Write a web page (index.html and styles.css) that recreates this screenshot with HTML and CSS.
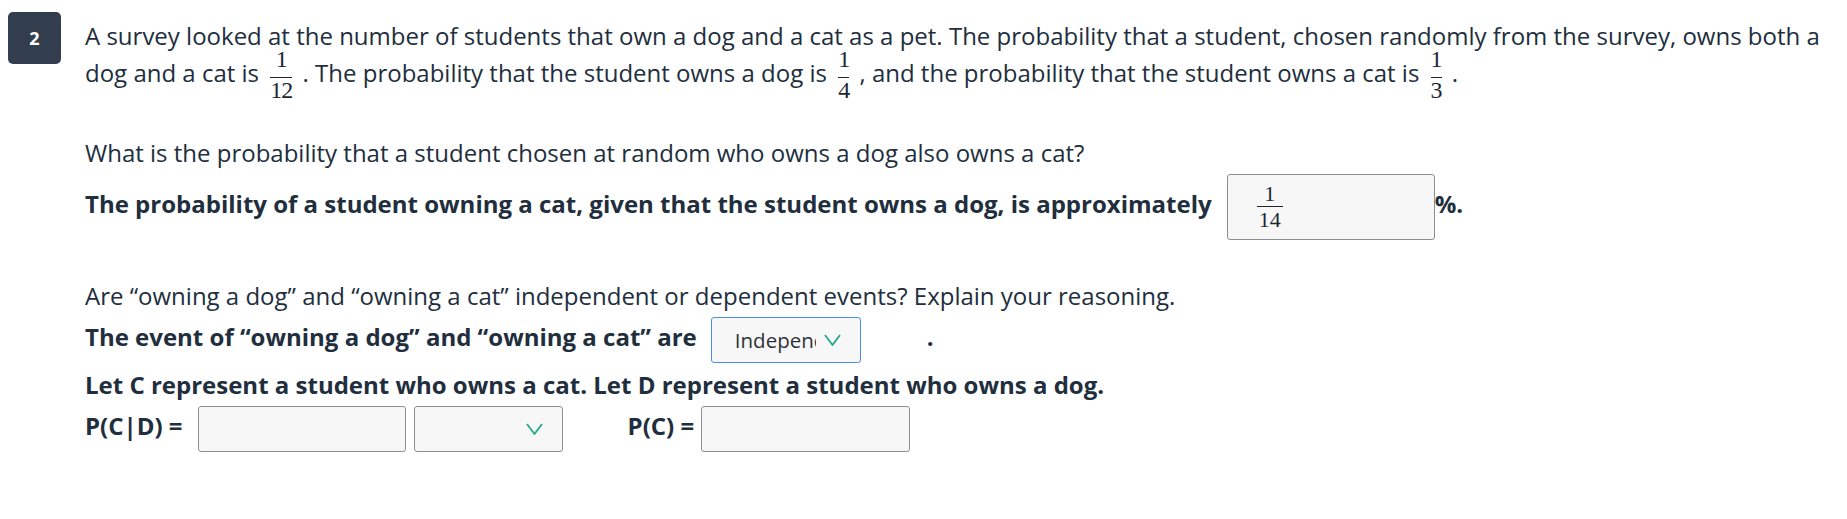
FILE: index.html
```html
<!DOCTYPE html>
<html lang="en">
<head>
<meta charset="utf-8">
<title>Question 2</title>
<link rel="stylesheet" href="styles.css">
</head>
<body>
<div class="question">
  <div class="badge">2</div>
  <div class="content">
    <p class="intro">A survey looked at the number of students that own a dog and a cat as a pet. The probability that a student, chosen randomly from the survey, owns both a dog and a cat is <span class="frac"><span class="num">1</span><span class="den">12</span></span> . The probability that the student owns a dog is <span class="frac"><span class="num">1</span><span class="den">4</span></span> , and the probability that the student owns a cat is <span class="frac"><span class="num">1</span><span class="den">3</span></span> .</p>
    <p class="ask">What is the probability that a student chosen at random who owns a dog also owns a cat?</p>
    <p class="row-tall bold">The probability of a student owning a cat, given that the student owns a dog, is approximately<span class="answer"><span class="frac frac-answer"><span class="num">1</span><span class="den">14</span></span></span>%.</p>
    <p class="ask2">Are “owning a dog” and “owning a cat” independent or dependent events? Explain your reasoning.</p>
    <p class="row bold">The event of “owning a dog” and “owning a cat” are<span class="select select-active"><span class="sel-text">Independent</span><svg class="chev" width="17" height="12" viewBox="0 0 17 12"><polyline points="1,1 8.5,11 16,1" fill="none" stroke="#22a98b" stroke-width="1.8"/></svg></span><span class="dot">.</span></p>
    <p class="row bold">Let C represent a student who owns a cat. Let D represent a student who owns a dog.</p>
    <p class="row bold">P(C|D) =<span class="inp inp-first"></span><span class="select select-empty"><svg class="chev" width="17" height="12" viewBox="0 0 17 12"><polyline points="1,1 8.5,11 16,1" fill="none" stroke="#22a98b" stroke-width="1.8"/></svg></span><span class="label-pc">P(C) =</span><span class="inp inp-pc"></span></p>
  </div>
</div>
</body>
</html>
```

FILE: styles.css
```css
html, body {
  margin: 0;
  padding: 0;
  background: #ffffff;
}

body {
  font-family: "Open Sans", "Liberation Sans", sans-serif;
  color: #212e3d;
}

.question {
  display: flex;
  align-items: flex-start;
  padding: 12px 8px 0 8px;
}

.badge {
  flex: 0 0 53px;
  height: 52px;
  background: #323e4d;
  color: #ffffff;
  border-radius: 5px;
  font-weight: 700;
  font-size: 18px;
  display: flex;
  align-items: center;
  justify-content: center;
}

.content {
  flex: 1;
  margin-left: 24px;
  padding-top: 7px;
  font-size: 24px;
  line-height: 33px;
}

.content p {
  margin: 0;
}

.bold {
  font-weight: 700;
}

.ask {
  margin-top: 36px !important;
}

.row-tall {
  margin-top: 5px !important;
}

.ask2 {
  margin-top: 39px !important;
}

.row {
  margin-top: 5px !important;
}

/* inline (display-style) fractions */
.frac {
  display: inline-flex;
  flex-direction: column;
  vertical-align: 15px;
  font-family: "Liberation Serif", "DejaVu Serif", serif;
  font-size: 24px;
  letter-spacing: -1px;
  font-weight: 400;
  padding: 0 4px 0 5px;
  text-align: center;
  color: #1d2733;
}

.num {
  display: block;
  line-height: 14px;
  padding-bottom: 11px;
}

.den {
  display: block;
  line-height: 20px;
  padding-top: 2px;
  border-top: 1px solid #1d2733;
}

/* fraction typed in the answer box */
.frac-answer {
  font-size: 22px;
  letter-spacing: 0;
  padding: 0;
  vertical-align: baseline;
}

.frac-answer .num {
  line-height: 20px;
  padding-bottom: 2px;
}

.frac-answer .den {
  padding: 3px 2px 0 2px;
}

.answer {
  display: inline-flex;
  align-items: center;
  vertical-align: middle;
  box-sizing: border-box;
  width: 208px;
  height: 66px;
  margin-left: 15px;
  padding-left: 29px;
  border: 1px solid #8e8e8e;
  border-radius: 3px;
  background: #f7f7f7;
}

.select {
  display: inline-flex;
  align-items: center;
  vertical-align: middle;
  box-sizing: border-box;
  height: 46px;
  border: 1px solid #8e8e8e;
  border-radius: 3px;
  background: #f7f7f7;
}

.select-active {
  width: 150px;
  margin-left: 14px;
  padding-left: 23px;
  border-color: #4a8fe6;
}

.sel-text {
  display: inline-block;
  width: 81px;
  overflow: hidden;
  white-space: nowrap;
  font-weight: 400;
  font-size: 20.5px;
  color: #2e3338;
}

.chev {
  display: block;
  margin-left: 8px;
}

.select-empty {
  width: 149px;
  margin-left: 8px;
  justify-content: flex-end;
  padding-right: 19px;
}

.dot {
  margin-left: 66px;
}

.inp {
  display: inline-block;
  vertical-align: middle;
  box-sizing: border-box;
  height: 46px;
  border: 1px solid #8e8e8e;
  border-radius: 3px;
  background: #f7f7f7;
}

.inp-first {
  width: 208px;
  margin-left: 15px;
}

.label-pc {
  margin-left: 65px;
}

.inp-pc {
  width: 209px;
  margin-left: 7px;
}
```
